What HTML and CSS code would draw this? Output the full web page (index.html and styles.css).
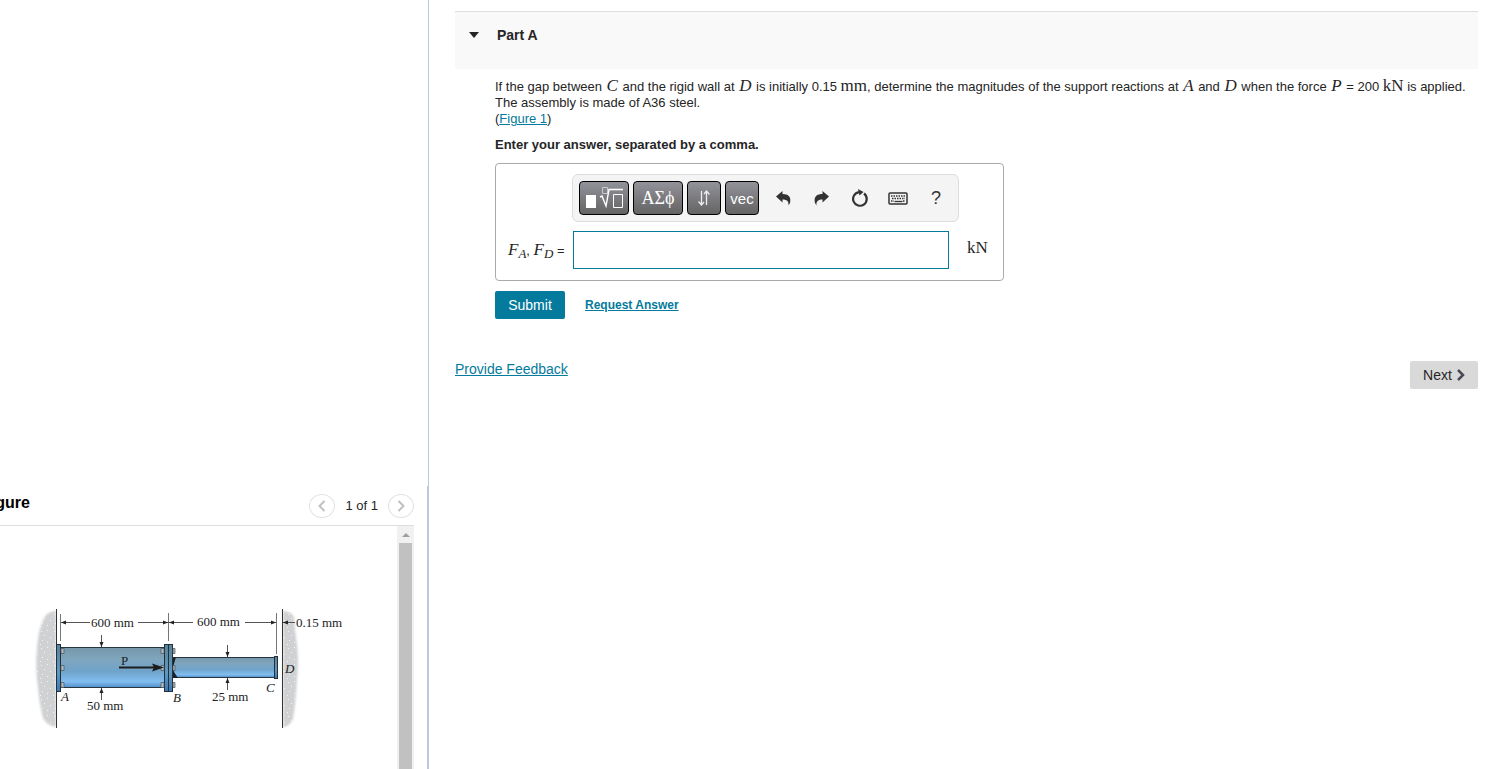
FILE: index.html
```html
<!DOCTYPE html>
<html lang="en">
<head>
    <meta charset="utf-8">
    <title>Part A</title>
    <link rel="stylesheet" href="styles.css">
</head>
<body>
    <div class="page">
        <aside class="sidebar">
            <div class="problem-space"></div>
            <section class="figure-panel">
                <div class="figure-header">
                    <h2>Figure</h2>
                    <div class="pager">
                        <button class="round" aria-label="Previous figure">
                            <svg width="10" height="14" viewBox="0 0 10 14"><path d="M7.5 2 2.5 7l5 5" /></svg>
                        </button>
                        <span>1 of 1</span>
                        <button class="round" aria-label="Next figure">
                            <svg width="10" height="14" viewBox="0 0 10 14"><path d="M2.5 2l5 5-5 5" /></svg>
                        </button>
                    </div>
                </div>
                <div class="figure-body">
                    <svg class="diagram" width="330" height="130" viewBox="30 602 330 130">
                        <defs>
                            <linearGradient id="steel" x1="0" y1="0" x2="0" y2="1">
                                <stop offset="0" stop-color="#7697aa" />
                                <stop offset="0.3" stop-color="#7fa6bd" />
                                <stop offset="0.6" stop-color="#6fa3cb" />
                                <stop offset="0.85" stop-color="#82bdf0" />
                                <stop offset="1" stop-color="#528fca" />
                            </linearGradient>
                            <linearGradient id="flange" x1="0" y1="0" x2="0" y2="1">
                                <stop offset="0" stop-color="#5b8299" />
                                <stop offset="0.6" stop-color="#5f98c0" />
                                <stop offset="1" stop-color="#3c79b4" />
                            </linearGradient>
                            <filter id="soft" x="-20%" y="-5%" width="140%" height="110%">
                                <feGaussianBlur stdDeviation="1.2" />
                            </filter>
                            <pattern id="grain" width="13" height="17" patternUnits="userSpaceOnUse">
                                <path d="M2 2.500h1M8 1.500h1M5 6.500h1M11 8.500h1M3 11.500h1M8 13.500h1M1 15.500h1" stroke="#f4f4f4" />
                            </pattern>
                        </defs>
                        <!-- walls -->
                        <path d="M56 611q-8 0-12 7-6 12-7 30-2 20 1 40 2 20 5 30 4 8 13 9z" fill="#d0d1d3" filter="url(#soft)" />
                        <path d="M56 611q-8 0-12 7-6 12-7 30-2 20 1 40 2 20 5 30 4 8 13 9z" fill="url(#grain)" />
                        <path d="M283 611q8 0 11 6 1 14 3 28 2 16 0 34-1 22-4 40-3 7-10 8z" fill="#d0d1d3" filter="url(#soft)" />
                        <path d="M283 611q8 0 11 6 1 14 3 28 2 16 0 34-1 22-4 40-3 7-10 8z" fill="url(#grain)" />
                        <path d="M56.500 609v119M282.500 609v119" stroke="#333" />
                        <!-- pipes -->
                        <rect x="60.500" y="647.500" width="104" height="40" fill="url(#steel)" stroke="#263640" />
                        <rect x="172.500" y="657.500" width="102" height="20" fill="url(#steel)" stroke="#263640" />
                        <path d="M172 658l4-1-3 10 1 5 4 6h-6z" fill="#1b2024" />
                        <g fill="url(#flange)" stroke="#20303c">
                            <rect x="56.500" y="644.500" width="4" height="47" />
                            <rect x="164.500" y="644.500" width="4" height="47" />
                            <rect x="168.500" y="644.500" width="4" height="47" />
                            <rect x="274.500" y="656.500" width="3" height="22" />
                        </g>
                        <g fill="#b0bac2" stroke="#4b5358" stroke-width="0.7">
                            <path d="M61 648.500h3v5h-3zM61 665.500h3v5h-3zM61 682.500h3v5h-3z" />
                            <path d="M161 648.500h3v5h-3zM161 665.500h3v5h-3zM161 682.500h3v5h-3z" />
                            <path d="M173 648.500h2v5h-2zM173 665.500h2v5h-2zM173 682.500h2v5h-2z" />
                        </g>
                        <!-- dimension lines -->
                        <path d="M60.500 614v27M168.500 613v28M276.500 613v41" stroke="#777" />
                        <path d="M61 622.500h29M138 622.500h55M245 622.500h31M283 622.500h12M101.500 635v12M101.500 688v12M227.500 645v12M227.500 678v12" stroke="#555" />
                        <path d="M61 622.500l5-2v4zM168 622.500l-5-2v4zM169 622.500l5-2v4zM276 622.500l-5-2v4zM283 622.500l5-2v4zM101.500 647l-2-5h4zM101.500 688l-2 5h4zM227.500 657l-2-5h4zM227.500 678l-2 5h4z" fill="#222" />
                        <path d="M119 667.500h35" stroke="#1d1d1d" stroke-width="2" />
                        <path d="M164 667.500l-12-4 2 4-2 4z" fill="#1d1d1d" />
                        <g class="labels">
                            <text x="91" y="627">600 mm</text>
                            <text x="197" y="626">600 mm</text>
                            <text x="296" y="627">0.15 mm</text>
                            <text x="87" y="710">50 mm</text>
                            <text x="212" y="701">25 mm</text>
                            <text x="121" y="665">P</text>
                            <g class="points">
                                <text x="61" y="701">A</text>
                                <text x="173" y="702">B</text>
                                <text x="266" y="692">C</text>
                                <text x="285" y="673">D</text>
                            </g>
                        </g>
                    </svg>
                    <div class="scrollbar">
                        <div class="scroll-up"></div>
                        <div class="scroll-thumb"></div>
                    </div>
                </div>
            </section>
        </aside>

        <main class="content">
            <header class="part-header">
                <button class="toggle" aria-label="Collapse Part A"></button>
                <h1>Part A</h1>
            </header>
            <div class="part-body">
                <p>If the gap between <i>C</i> and the rigid wall at <i>D</i> is initially 0.15 <b>mm</b>, determine the magnitudes of the support reactions at <i>A</i> and <i>D</i> when the force <i>P</i> = 200 <b>kN</b> is applied. The assembly is made of A36 steel.<br>(<a href="#">Figure 1</a>)</p>
                <p class="instruction">Enter your answer, separated by a comma.</p>
                <div class="answer-box">
                    <div class="toolbar">
                        <button class="key wide" aria-label="Templates">
                            <svg width="38" height="26" viewBox="0 0 38 26" fill="none" stroke="#fff">
                                <path d="M1 10h10v13H1z" fill="#fff" stroke="none" />
                                <path d="M17.500 2.500h5v6h-5z" stroke="#c9c9cc" />
                                <path d="M15 12l2-1 4 10 3-16.500h14" stroke-width="1.400" />
                                <path d="M28.500 9.500h9v13h-9z" />
                            </svg>
                        </button>
                        <button class="key wide greek">ΑΣϕ</button>
                        <button class="key" aria-label="Subscript and superscript">
                            <svg width="14" height="16" viewBox="0 0 14 16" fill="none" stroke="#eee" stroke-width="1.300">
                                <path d="M4.500 1v14M1.500 11.500l3 3.500 2.500-3M9.500 15V1M7 4l2.500-3 3 3.500" />
                            </svg>
                        </button>
                        <button class="key">vec</button>
                        <div class="tools">
                            <button class="tool" aria-label="Undo">
                                <svg width="16" height="16" viewBox="0 0 16 16"><path d="M0 6.500 6.500 1v3c6 0 9 3 7.500 9l-1.500 2.500c.5-4-1.500-6-6-6v3z" fill="#333" /></svg>
                            </button>
                            <button class="tool" aria-label="Redo">
                                <svg width="16" height="16" viewBox="0 0 16 16"><path d="M15 6.500 8.500 1v3C2.500 4-.5 7 1 13l1.500 2.500c-.5-4 1.500-6 6-6v3z" fill="#333" /></svg>
                            </button>
                            <button class="tool" aria-label="Reset">
                                <svg width="18" height="18" viewBox="0 0 18 18"><path d="M13 4.500A6.800 6.800 0 1 1 8 3.200" fill="none" stroke="#333" stroke-width="2.200" /><path d="M7 0l5.500 3L8.500 6.500z" fill="#333" /></svg>
                            </button>
                            <button class="tool" aria-label="Keyboard">
                                <svg width="20" height="14" viewBox="0 0 20 14">
                                    <rect x="1" y="2" width="18" height="11" rx="1" fill="none" stroke="#333" stroke-width="1.500" />
                                    <path d="M3 5h14M4 7.500h13M3 10h3M15 10h2" stroke="#333" stroke-width="1.500" stroke-dasharray="1.500 1" />
                                    <path d="M6.500 10.500h8" stroke="#333" stroke-width="1.300" />
                                </svg>
                            </button>
                            <button class="tool help" aria-label="Help">?</button>
                        </div>
                    </div>
                    <div class="answer-row">
                        <label for="answer"><i>F<sub>A</sub></i>, <i>F<sub>D</sub></i> =</label>
                        <input id="answer" type="text">
                        <span class="unit">kN</span>
                    </div>
                </div>
                <div class="actions">
                    <button class="submit">Submit</button>
                    <a href="#">Request Answer</a>
                </div>
            </div>
            <footer class="page-footer">
                <a href="#">Provide Feedback</a>
                <button class="next">Next
                    <svg width="8" height="12" viewBox="0 0 8 12"><path d="M1 1l5 5-5 5" fill="none" stroke="#474756" stroke-width="2.500" /></svg>
                </button>
            </footer>
        </main>
    </div>
</body>
</html>
```
FILE: styles.css
```css
* {
    box-sizing: border-box;
}

body {
    margin: 0;
    font-family: "Liberation Sans", Arial, sans-serif;
    font-size: 13px;
    color: #252525;
    background: #fff;
}

button {
    font-family: inherit;
    padding: 0;
    border: none;
    cursor: pointer;
}

h1, h2, p {
    margin: 0;
}

a {
    color: #047a9c;
}

svg {
    display: block;
}

.page {
    display: flex;
    min-height: 100vh;
}

.sidebar {
    flex: 0 0 429px;
    display: flex;
    flex-direction: column;
    overflow: hidden;
}

.problem-space {
    flex: 1;
    border-right: 1px solid #b8cadb;
}

/* Figure panel */
.figure-panel {
    flex: 0 0 283px;
    display: flex;
    flex-direction: column;
    padding-right: 13px;
    border-right: 2px solid #b8cadb;
}

.figure-header {
    display: flex;
    justify-content: space-between;
    align-items: center;
    height: 40px;
    margin-left: -19px;
    border-bottom: 1px solid #ddd;
}

.figure-header h2 {
    font-size: 16px;
    line-height: 20px;
    padding-bottom: 6px;
    color: #000;
}

.pager {
    display: flex;
    align-items: center;
    gap: 10px;
    font-size: 13px;
    line-height: 20px;
}

.round {
    display: flex;
    align-items: center;
    justify-content: center;
    width: 26px;
    height: 24px;
    border: 1px solid #e2e2e2;
    border-radius: 50%;
    background: #fff;
}

.round path {
    fill: none;
    stroke: #c0c0c0;
    stroke-width: 2;
}

.figure-body {
    flex: 1;
    display: flex;
    justify-content: space-between;
}

.diagram {
    margin: 76px 0 0 30px;
}

.labels {
    font-family: "Liberation Serif", serif;
    font-size: 13px;
    fill: #222;
}

.points {
    font-style: italic;
}

.scrollbar {
    display: flex;
    flex-direction: column;
    align-items: center;
    width: 17px;
    background: #f1f1f1;
}

.scroll-up {
    margin: 7px 0 6px;
    border: 4px solid transparent;
    border-top: none;
    border-bottom-color: #a0a0a0;
}

.scroll-thumb {
    flex: 1;
    width: 13px;
    background: #c1c1c1;
}

/* Question */
.content {
    flex: 1;
    min-width: 0;
    padding: 11px 12px 0 26px;
}

.part-header {
    display: flex;
    align-items: flex-start;
    gap: 18px;
    height: 58px;
    padding: 14px;
    border-top: 1px solid #ddd;
    background: #f9f9f9;
}

.part-header h1 {
    font-size: 14px;
    line-height: 18px;
}

.toggle {
    margin-top: 6px;
    border: 5px solid transparent;
    border-top: 6px solid #252525;
    border-bottom: none;
    background: none;
}

.part-body {
    padding: 10px 0 0 40px;
}

.part-body p {
    line-height: 16px;
}

.part-body p i,
.part-body p b,
.answer-row label i,
.unit {
    font-family: "Liberation Serif", serif;
    font-size: 17px;
    font-weight: normal;
    line-height: 14px;
}

.part-body p i {
    margin: 0 1px;
}

.part-body .instruction {
    margin: 10px 0;
    font-weight: bold;
}

.answer-box {
    width: 509px;
    max-width: 100%;
    height: 118px;
    padding: 10px 12px;
    border: 1px solid #aaa;
    border-radius: 4px;
}

.toolbar {
    display: flex;
    align-items: center;
    gap: 4px;
    width: 387px;
    height: 48px;
    margin-left: 64px;
    padding: 0 6px;
    border: 1px solid #ddd;
    border-radius: 6px;
    background: #f4f4f4;
}

.key {
    display: flex;
    align-items: center;
    justify-content: center;
    width: 34px;
    height: 34px;
    border: 1px solid #000;
    border-radius: 4px;
    background: linear-gradient(#92929a, #646464);
    color: #fff;
    font-size: 15px;
}

.wide {
    width: 50px;
}

.greek {
    font-family: "Liberation Serif", serif;
    font-size: 18px;
}

.tools {
    flex: 1;
    display: flex;
    justify-content: space-between;
    padding: 0 6px 0 11px;
}

.tool {
    display: flex;
    align-items: center;
    justify-content: center;
    width: 20px;
    height: 24px;
    background: none;
    color: #333;
}

.help {
    font-size: 18px;
}

.answer-row {
    display: flex;
    align-items: center;
    margin-top: 9px;
}

.answer-row label {
    width: 65px;
    white-space: nowrap;
}

.answer-row sub {
    font-size: 13px;
    line-height: 1px;
    vertical-align: -3px;
}

.answer-row input {
    width: 376px;
    height: 38px;
    padding: 0 8px;
    border: 1px solid #047a9c;
    font-size: 16px;
}

.unit {
    margin-left: 18px;
    padding-bottom: 4px;
}

.actions {
    display: flex;
    align-items: center;
    gap: 20px;
    margin-top: 10px;
    font-size: 12px;
    font-weight: bold;
}

.submit {
    width: 70px;
    height: 28px;
    border-radius: 2px;
    background: #047a9c;
    color: #fff;
    font-size: 14px;
}

.page-footer {
    display: flex;
    justify-content: space-between;
    align-items: flex-start;
    margin-top: 42px;
    font-size: 14px;
}

.next {
    display: flex;
    align-items: center;
    justify-content: center;
    gap: 5px;
    width: 68px;
    height: 28px;
    border-radius: 2px;
    background: #d9d9d9;
    color: #252525;
    font-size: 14px;
}
```
